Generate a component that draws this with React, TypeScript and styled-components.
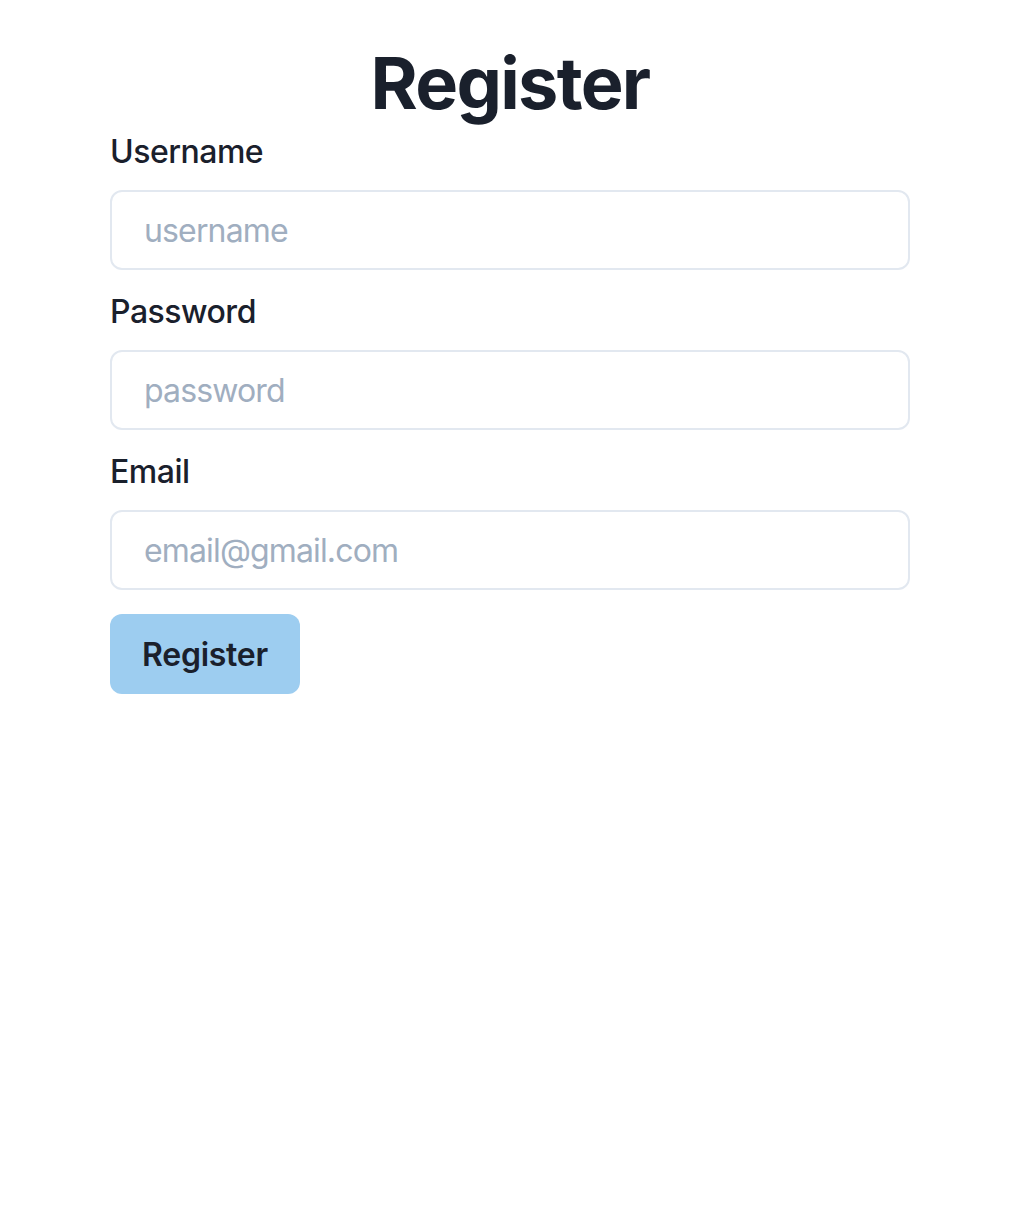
import styled, { createGlobalStyle } from "styled-components";

const GlobalStyle = createGlobalStyle`
  html, body {
    margin: 0;
    padding: 0;
    background: #ffffff;
  }
  body {
    font-family: Inter, "Noto Sans", sans-serif;
    color: #1a202c;
  }
  * {
    box-sizing: border-box;
  }
`;

const Page = styled.div`
  width: 1020px;
  padding-top: 40px;
  display: flex;
  flex-direction: column;
  align-items: center;
`;

const Title = styled.h1`
  margin: 0;
  font-size: 72px;
  font-weight: 700;
  line-height: 1.2;
  letter-spacing: -1.7px;
  color: #1a202c;
`;

const Form = styled.form`
  width: 800px;
  display: flex;
  flex-direction: column;
`;

const Field = styled.div`
  display: flex;
  flex-direction: column;
  margin-bottom: 16px;
`;

const Label = styled.label`
  font-size: 32px;
  font-weight: 500;
  line-height: 48px;
  padding-top: 2px;
  margin-bottom: 14px;
  letter-spacing: -0.5px;
  color: #1a202c;
`;

const Input = styled.input`
  height: 80px;
  width: 100%;
  padding: 0 32px;
  border: 2px solid #e2e8f0;
  border-radius: 12px;
  font-family: Inter, "Noto Sans", sans-serif;
  font-size: 32px;
  letter-spacing: -0.85px;
  color: #1a202c;
  background: #ffffff;
  outline: none;

  &::placeholder {
    color: #a0aec0;
  }
`;

const Button = styled.button`
  align-self: flex-start;
  margin-top: 8px;
  height: 80px;
  padding: 0 32px;
  border: none;
  border-radius: 12px;
  background: #9dcdf0;
  font-family: Inter, "Noto Sans", sans-serif;
  font-size: 32px;
  font-weight: 600;
  letter-spacing: -0.25px;
  color: #1a202c;
  cursor: pointer;
`;

const fields = [
  { id: "username", label: "Username", placeholder: "username", type: "text" },
  { id: "password", label: "Password", placeholder: "password", type: "password" },
  { id: "email", label: "Email", placeholder: "email@gmail.com", type: "email" },
];

export default function App() {
  return (
    <>
      <GlobalStyle />
      <Page>
        <Title>Register</Title>
        <Form onSubmit={(e) => e.preventDefault()}>
          {fields.map((f) => (
            <Field key={f.id}>
              <Label htmlFor={f.id}>{f.label}</Label>
              <Input id={f.id} type={f.type} placeholder={f.placeholder} />
            </Field>
          ))}
          <Button type="submit">Register</Button>
        </Form>
      </Page>
    </>
  );
}
